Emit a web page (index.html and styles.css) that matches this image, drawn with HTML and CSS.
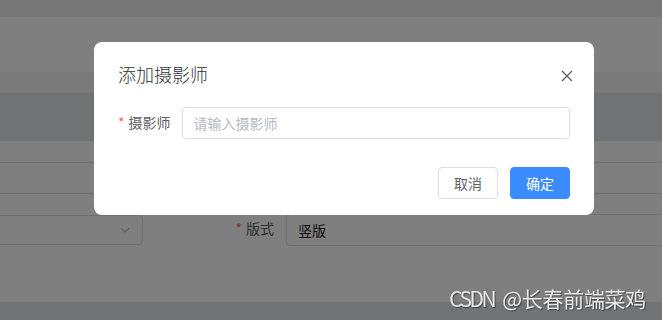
FILE: index.html
```html
<html>

<head>
  <meta charset="utf-8" />
  <link rel="stylesheet" href="styles.css">
</head>

<body>
  <div class="page">
    <div class="topbar"></div>
    <div class="crumb"></div>
    <div class="tabs"></div>
    <div class="thead"></div>
    <div class="content">
      <div class="line-box"></div>
      <div class="form-row">
        <div class="select">
          <svg class="chevron" width="10" height="6" viewBox="0 0 10 6">
            <path d="M1 1 L5 5 L9 1" fill="none" stroke="#c0c4cc" stroke-width="1.2" />
          </svg>
        </div>
        <label class="bg-label"><span class="star">*</span>版式</label>
        <div class="bg-input">竖版</div>
      </div>
    </div>
    <div class="footer"></div>
  </div>

  <div class="mask">
    <div class="dialog">
      <div class="dialog-header">
        <span class="dialog-title">添加摄影师</span>
        <svg class="close" width="12" height="12" viewBox="0 0 12 12">
          <path d="M1 1 L11 11 M11 1 L1 11" stroke="#5e6166" stroke-width="1.4" fill="none" />
        </svg>
      </div>
      <div class="dialog-body">
        <div class="item">
          <label class="item-label"><span class="star">*</span>摄影师</label>
          <input class="item-input" type="text" placeholder="请输入摄影师">
        </div>
      </div>
      <div class="dialog-footer">
        <button class="btn">取消</button>
        <button class="btn btn-primary">确定</button>
      </div>
    </div>
  </div>

  <div class="watermark"><span class="wm-latin">CSDN</span>@长春前端菜鸡</div>
</body>

</html>
```

FILE: styles.css
```css
body {
  margin: 0;
  font-family: "Noto Sans CJK SC", "Noto Sans", sans-serif;
  font-size: 14px;
  color: #303133;
  overflow: hidden;
}

.page {
  width: 662px;
  height: 320px;
  display: flex;
  flex-direction: column;
  background-color: #fff;
}

.topbar {
  height: 17px;
  background-color: #eeeeee;
}

.crumb {
  height: 55px;
  background-color: #fff;
}

.tabs {
  height: 21px;
  background-color: #f4f4f4;
}

.thead {
  height: 48px;
  background-color: #e2e4e6;
}

.content {
  flex: 1;
  padding-top: 21px;
}

.line-box {
  height: 30px;
  border-top: 1px solid #dcdfe6;
  border-bottom: 1px solid #dcdfe6;
}

.form-row {
  display: flex;
  align-items: center;
  margin-top: 20px;
  height: 32px;
}

.select {
  width: 160px;
  height: 30px;
  margin-left: -17px;
  border: 1px solid #dcdfe6;
  border-radius: 4px;
  display: flex;
  align-items: center;
  justify-content: flex-end;
  padding-right: 12px;
  box-sizing: border-box;
}

.bg-label {
  width: 143px;
  text-align: right;
  padding-right: 12px;
  box-sizing: border-box;
  color: #606266;
  line-height: 30px;
  margin-top: -4px;
}

.bg-input {
  flex: 1;
  height: 30px;
  margin-right: -10px;
  border: 1px solid #dcdfe6;
  border-radius: 4px;
  padding-left: 11px;
  line-height: 30px;
  color: #1f2022;
}

.star {
  color: #f56c6c;
  margin-right: 4px;
}

.footer {
  height: 18px;
  background-color: #e4e6e8;
}

.mask {
  position: fixed;
  top: 0;
  left: 0;
  right: 0;
  bottom: 0;
  background-color: rgba(0, 0, 0, 0.5);
}

.dialog {
  width: 500px;
  margin: 42px 0 0 94px;
  background-color: #fff;
  border-radius: 8px;
  padding: 20px 24px 16px;
  box-sizing: border-box;
}

.dialog-header {
  display: flex;
  align-items: center;
  justify-content: space-between;
  height: 24px;
}

.dialog-title {
  font-size: 18px;
  font-weight: 300;
  line-height: 24px;
  color: #303133;
}

.close {
  margin-top: 4px;
  margin-right: -3px;
}

.dialog-body {
  padding-top: 21px;
}

.item {
  display: flex;
  align-items: center;
}

.item-label {
  padding-right: 11px;
  color: #606266;
  line-height: 32px;
  margin-top: -2px;
}

.item-input {
  flex: 1;
  height: 32px;
  border: 1px solid #dcdfe6;
  border-radius: 4px;
  padding: 0 11px;
  font-family: inherit;
  font-size: 14px;
  color: #606266;
  outline: none;
}

.item-input::placeholder {
  color: #b5b9c2;
}

.dialog-footer {
  display: flex;
  justify-content: flex-end;
  gap: 12px;
  margin-top: 28px;
}

.btn {
  width: 60px;
  height: 32px;
  border: 1px solid #dcdfe6;
  border-radius: 4px;
  background-color: #fff;
  color: #606266;
  font-family: inherit;
  font-size: 14px;
  padding: 0;
}

.btn-primary {
  background-color: #3a8bff;
  border-color: #3a8bff;
  color: #fff;
}

.watermark {
  position: absolute;
  right: 16px;
  bottom: 7px;
  font-size: 21px;
  color: #e8e8e8;
  letter-spacing: -0.3px;
  text-shadow: 1px 1px 1px rgba(0, 0, 0, 0.45);
}

.wm-latin {
  letter-spacing: -2.5px;
  margin-right: 8px;
}
```
